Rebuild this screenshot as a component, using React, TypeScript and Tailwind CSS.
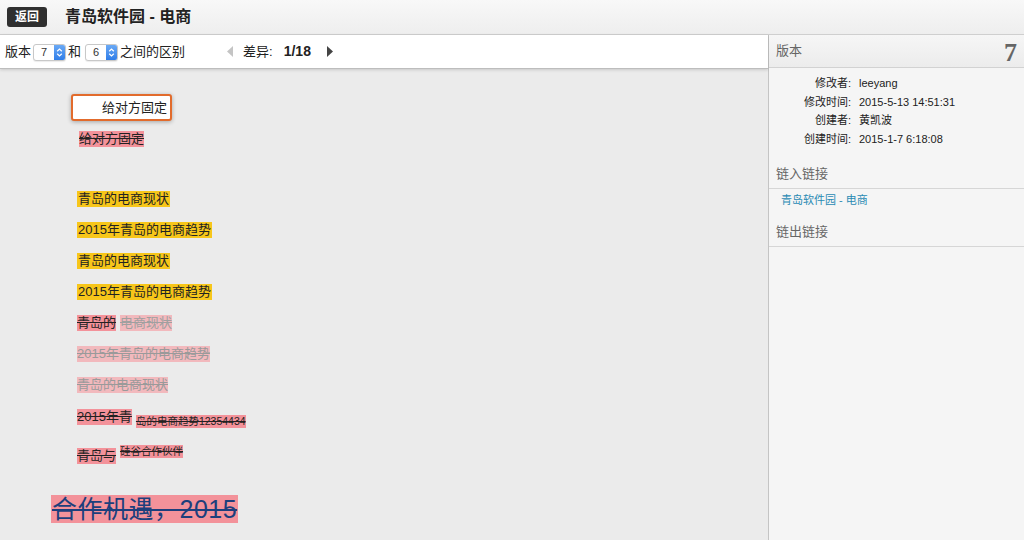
import React from "react";

const font = "font-['Liberation_Sans','Noto_Sans_CJK_SC',sans-serif]";

const Stepper = ({ value }: { value: string }) => (
  <span className="inline-flex items-center h-[17px] w-[33px] bg-white border border-[#c8c8c8] rounded-[3px] shadow-[0_1px_1px_rgba(0,0,0,0.08)] overflow-hidden">
    <span className="flex-1 text-[11px] text-[#333] pl-[7px] leading-none">{value}</span>
    <span className="w-[11px] h-full bg-gradient-to-b from-[#6aa9f5] to-[#2f7de8] flex items-center justify-center">
      <svg width="7" height="11" viewBox="0 0 7 11" fill="none" stroke="white" strokeWidth="1.2">
        <path d="M1.2 4.2 L3.5 2 L5.8 4.2" />
        <path d="M1.2 6.8 L3.5 9 L5.8 6.8" />
      </svg>
    </span>
  </span>
);

const Yellow = ({ children }: { children: React.ReactNode }) => (
  <div className="h-[31px] flex items-center">
    <span className="bg-[#f7c61a] text-[#222] text-[13px] leading-[16px] px-[1px]">{children}</span>
  </div>
);

const delDark = "bg-[#f3929a] text-[#222] line-through decoration-[#222]";
const delLight = "bg-[#f2b9bd] text-[#9a9a9a] line-through decoration-[#9a9a9a]";

const infoRows: [string, string][] = [
  ["修改者:", "leeyang"],
  ["修改时间:", "2015-5-13 14:51:31"],
  ["创建者:", "黄凯波"],
  ["创建时间:", "2015-1-7 6:18:08"],
];

export default function App() {
  return (
    <div className={`w-[1024px] h-[540px] overflow-hidden bg-[#ebebeb] flex flex-col ${font}`}>
      {/* top bar */}
      <header className="h-[35px] shrink-0 flex items-center bg-gradient-to-b from-[#f8f8f8] to-[#eeeeee] border-b border-[#cfcfcf]">
        <button className="ml-[7px] h-[20px] w-[40px] rounded-[3px] bg-[#2f2f2f] text-white text-[12px] font-bold leading-none">
          返回
        </button>
        <h1 className="ml-[18px] text-[16px] font-bold text-[#222]">青岛软件园 - 电商</h1>
      </header>

      <div className="flex flex-1 min-h-0">
        {/* main pane */}
        <main className="w-[769px] shrink-0 flex flex-col border-r border-[#c4c4c4]">
          <div className="h-[34px] shrink-0 bg-white flex items-center pl-[5px] text-[13px] text-[#222] border-b border-[#bdbdbd] shadow-[0_1px_3px_rgba(0,0,0,0.15)]">
            <span>版本</span>
            <span className="ml-[2px]"><Stepper value="7" /></span>
            <span className="ml-[2px]">和</span>
            <span className="ml-[4px]"><Stepper value="6" /></span>
            <span className="ml-[2px]">之间的区别</span>
            <svg className="ml-[42px]" width="6" height="11" viewBox="0 0 6 11">
              <path d="M6 0 L0 5.5 L6 11 Z" fill="#c4c4c4" />
            </svg>
            <span className="ml-[10px]">差异:</span>
            <span className="ml-[11px] font-bold text-[14px]">1/18</span>
            <svg className="ml-[16px]" width="6" height="11" viewBox="0 0 6 11">
              <path d="M0 0 L6 5.5 L0 11 Z" fill="#444" />
            </svg>
          </div>

          <div className="flex-1 pt-[25px]">
            <div className="ml-[71px] w-[101px] h-[27px] bg-white border-2 border-[#e26b2c] rounded-[3px] shadow-[0_1px_4px_rgba(0,0,0,0.3)] flex items-center justify-end pr-[3px] text-[13px] text-[#222]">
              给对方固定
            </div>
            <div className="ml-[79px] mt-[8px] h-[20px] flex items-center">
              <span className={`${delDark} text-[13px] leading-[16px]`}>给对方固定</span>
            </div>

            <div className="ml-[77px] mt-[34px] flex flex-col">
              <Yellow>青岛的电商现状</Yellow>
              <Yellow>2015年青岛的电商趋势</Yellow>
              <Yellow>青岛的电商现状</Yellow>
              <Yellow>2015年青岛的电商趋势</Yellow>

              <div className="h-[31px] flex items-center text-[13px] leading-[16px]">
                <span className={delDark}>青岛的</span>
                <span className="ml-[4px] bg-[#f2b9bd] text-[#a0a0a0] line-through decoration-[#a0a0a0]">电商现状</span>
              </div>
              <div className="h-[31px] flex items-center text-[13px] leading-[16px]">
                <span className={delLight}>2015年青岛的电商趋势</span>
              </div>
              <div className="h-[31px] flex items-center text-[13px] leading-[16px]">
                <span className={delLight}>青岛的电商现状</span>
              </div>
              <div className="h-[33px] flex items-end pb-[8px]">
                <span className={`${delDark} text-[13px] leading-[16px]`}>2015年青</span>
                <span className={`${delDark} ml-[4px] text-[10.5px] leading-[13px] mb-[-3px]`}>岛的电商趋势12354434</span>
              </div>
              <div className="h-[33px] flex items-end pb-[2px]">
                <span className={`${delDark} text-[13px] leading-[16px]`}>青岛与</span>
                <span className={`${delDark} ml-[4px] text-[10.5px] leading-[13px] mb-[6px]`}>硅谷合作伙伴</span>
              </div>
            </div>

            <div className="ml-[51px] mt-[28px]">
              <span className="bg-[#f3929a] text-[#1d3f7c] text-[25px] leading-[30px] tracking-[0.5px] line-through decoration-[#1d3f7c] px-[1px]">
                合作机遇，2015
              </span>
            </div>
          </div>
        </main>

        {/* sidebar */}
        <aside className="flex-1 bg-[#f5f5f5] flex flex-col">
          <div className="h-[33px] flex items-center justify-between px-[7px] bg-gradient-to-b from-[#f6f6f6] to-[#ececec] border-b border-[#d2d2d2]">
            <span className="text-[13px] text-[#666]">版本</span>
            <span className="text-[26px] font-bold text-[#666] font-['Liberation_Serif',serif] leading-none mt-[4px]">7</span>
          </div>
          <div className="pt-[6px] pb-[12px] flex flex-col">
            {infoRows.map(([k, v]) => (
              <div key={k} className="h-[18.5px] flex items-center text-[11px] text-[#222]">
                <span className="w-[82px] text-right">{k}</span>
                <span className="ml-[8px]">{v}</span>
              </div>
            ))}
          </div>
          <div className="h-[29px] flex items-end pb-[5px] px-[7px] border-b border-[#d6d6d6] text-[13px] text-[#666]">
            链入链接
          </div>
          <div className="h-[23px] flex items-center pl-[12px] text-[11px] text-[#2a8bb4]">青岛软件园 - 电商</div>
          <div className="h-[35px] flex items-end pb-[5px] px-[7px] border-b border-[#d6d6d6] text-[13px] text-[#666]">
            链出链接
          </div>
        </aside>
      </div>
    </div>
  );
}
